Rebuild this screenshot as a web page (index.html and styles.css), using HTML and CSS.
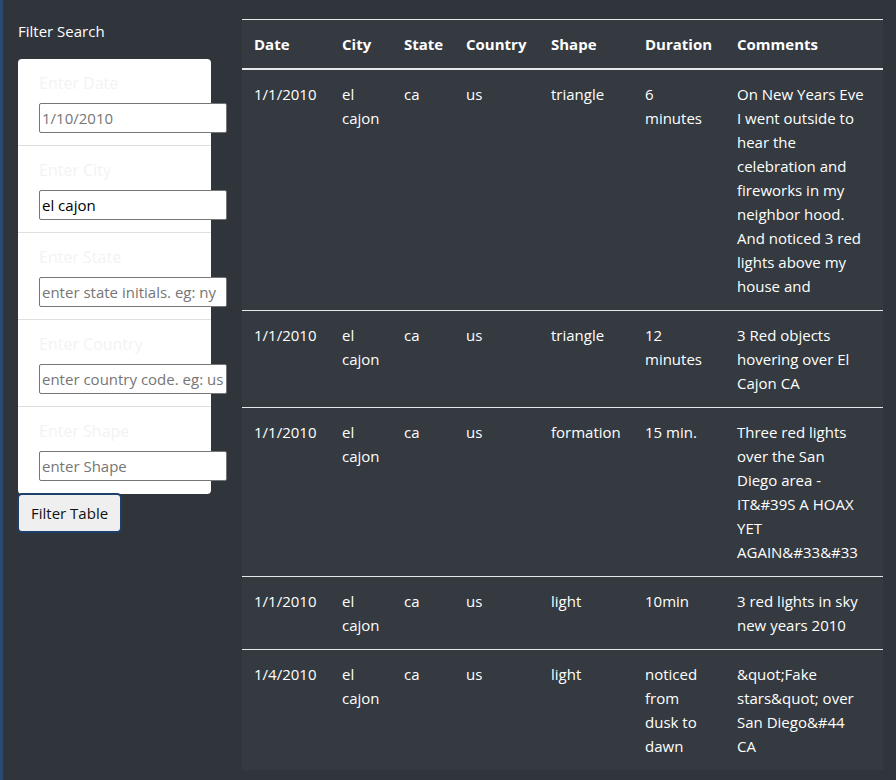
FILE: index.html
```html
<!DOCTYPE html>
<html lang="en">
<head>
<meta charset="utf-8">
<title>UFO Sightings</title>
<link rel="stylesheet" href="styles.css">
</head>
<body>
<div class="page">
  <aside class="sidebar">
    <div class="side-title">Filter Search</div>
    <ul class="filters">
      <li class="filter-item">
        <label class="filter-label" for="datetime">Enter Date</label>
        <input class="filter-input" id="datetime" type="text" placeholder="1/10/2010">
      </li>
      <li class="filter-item">
        <label class="filter-label" for="city">Enter City</label>
        <input class="filter-input" id="city" type="text" value="el cajon">
      </li>
      <li class="filter-item">
        <label class="filter-label" for="state">Enter State</label>
        <input class="filter-input" id="state" type="text" placeholder="enter state initials. eg: ny">
      </li>
      <li class="filter-item">
        <label class="filter-label" for="country">Enter Country</label>
        <input class="filter-input" id="country" type="text" placeholder="enter country code. eg: us">
      </li>
      <li class="filter-item">
        <label class="filter-label" for="shape">Enter Shape</label>
        <input class="filter-input" id="shape" type="text" placeholder="enter Shape">
      </li>
    </ul>
    <button class="filter-btn" type="button">Filter Table</button>
  </aside>
  <main class="content">
    <table class="ufo-table">
      <colgroup>
        <col class="c-date"><col class="c-city"><col class="c-state"><col class="c-country"><col class="c-shape"><col class="c-dur"><col class="c-com">
      </colgroup>
      <thead>
        <tr>
          <th>Date</th>
          <th>City</th>
          <th>State</th>
          <th>Country</th>
          <th>Shape</th>
          <th>Duration</th>
          <th class="com">Comments</th>
        </tr>
      </thead>
      <tbody>
        <tr>
          <td>1/1/2010</td><td>el cajon</td><td>ca</td><td>us</td><td>triangle</td><td>6 minutes</td>
          <td class="com">On New Years Eve I went outside to hear the celebration and fireworks in my neighbor hood. And noticed 3 red lights above my house and</td>
        </tr>
        <tr>
          <td>1/1/2010</td><td>el cajon</td><td>ca</td><td>us</td><td>triangle</td><td>12 minutes</td>
          <td class="com">3 Red objects hovering over El Cajon CA</td>
        </tr>
        <tr>
          <td>1/1/2010</td><td>el cajon</td><td>ca</td><td>us</td><td>formation</td><td>15 min.</td>
          <td class="com">Three red lights over the San Diego area - IT&amp;#39S A HOAX YET AGAIN&amp;#33&amp;#33</td>
        </tr>
        <tr>
          <td>1/1/2010</td><td>el cajon</td><td>ca</td><td>us</td><td>light</td><td>10min</td>
          <td class="com">3 red lights in sky new years 2010</td>
        </tr>
        <tr>
          <td>1/4/2010</td><td>el cajon</td><td>ca</td><td>us</td><td>light</td><td>noticed from dusk to dawn</td>
          <td class="com">&amp;quot;Fake stars&amp;quot; over San Diego&amp;#44 CA</td>
        </tr>
      </tbody>
    </table>
  </main>
</div>
</body>
</html>
```

FILE: styles.css
```css
html, body {
  margin: 0;
  padding: 0;
}

body {
  background: #30353b;
  border-left: 3px solid #2b4a73;
  min-height: 780px;
  box-sizing: border-box;
  font-family: "Segoe UI", "Open Sans", "Noto Sans", sans-serif;
  font-size: 16px;
  line-height: 24px;
  color: #ffffff;
}

.page {
  display: flex;
  align-items: flex-start;
  padding-top: 19px;
}

.sidebar {
  width: 193px;
  margin-left: 15px;
  flex: none;
}

.side-title {
  font-size: 15px;
  line-height: 24px;
  margin-bottom: 16px;
}

.filters {
  list-style: none;
  margin: 0;
  padding: 0;
  background: #ffffff;
  border-radius: 4px;
}

.filter-item {
  padding: 12px 20px 12px 21px;
  border-bottom: 1px solid #dfdfdf;
  display: flex;
  flex-direction: column;
  align-items: flex-start;
}

.filter-item:last-child {
  border-bottom: none;
  padding-bottom: 13px;
}

.filter-label {
  color: #f3f3f3;
  font-size: 16px;
  line-height: 24px;
  margin-bottom: 8px;
}

.filter-input {
  width: 188px;
  height: 30px;
  box-sizing: border-box;
  flex: none;
  border: 1px solid #767676;
  border-radius: 2px;
  padding: 0 2px;
  font-family: inherit;
  font-size: 15px;
  color: #000000;
  background: #ffffff;
}

.filter-input::placeholder {
  color: #767676;
}

.filter-btn {
  display: block;
  margin-left: -1px;
  margin-top: -1px;
  height: 40px;
  background: #efefef;
  border: 2px solid #1c3f6c;
  border-radius: 5px;
  font-family: inherit;
  font-size: 15px;
  color: #111111;
  padding: 0 12px;
  white-space: nowrap;
}

.content {
  margin-left: 31px;
  width: 641px;
  flex: none;
}

.ufo-table {
  width: 641px;
  border-collapse: collapse;
  table-layout: fixed;
  background: #343a40;
  color: #ffffff;
}

.ufo-table th,
.ufo-table td {
  padding: 12px;
  text-align: left;
  vertical-align: top;
  border-top: 1px solid #e6e9ec;
  font-size: 15px;
  line-height: 24px;
}

.ufo-table th {
  font-weight: 700;
  border-bottom: 2px solid #e6e9ec;
}

.ufo-table .com {
  padding-right: 19px;
}

.ufo-table tbody tr:first-child td {
  border-top: none;
}

.c-date { width: 88px; }
.c-city { width: 62px; }
.c-state { width: 62px; }
.c-country { width: 85px; }
.c-shape { width: 94px; }
.c-dur { width: 92px; }
.c-com { width: 158px; }
```
